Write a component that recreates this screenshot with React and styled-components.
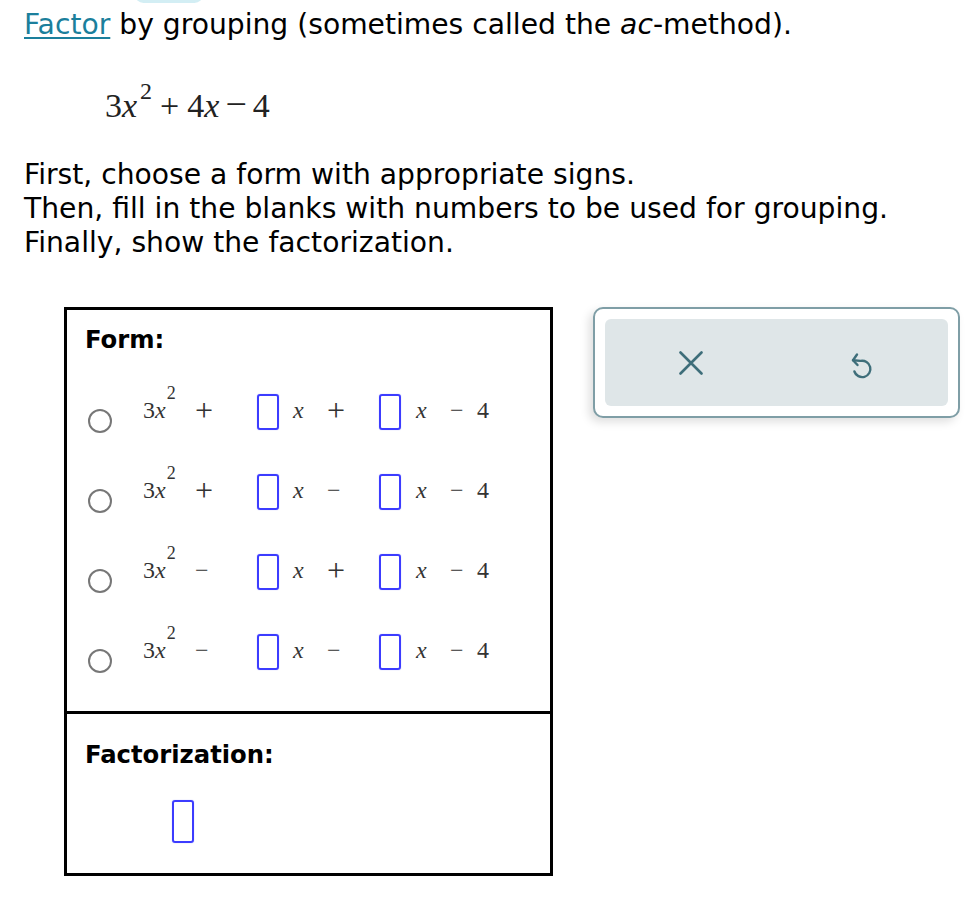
import React from "react";
import styled, { createGlobalStyle } from "styled-components";

const Global = createGlobalStyle`
  html, body { margin: 0; padding: 0; background: #fff; }
  body { font-family: "DejaVu Sans", Verdana, sans-serif; color: #000; }
`;

const Page = styled.div`
  position: relative;
  width: 966px;
  box-sizing: border-box;
  padding: 8px 0 0 24px;
`;

const TooltipTail = styled.div`
  position: absolute;
  left: 135px;
  top: -14px;
  width: 68px;
  height: 17px;
  border-radius: 9px;
  background: #d3eef4;
`;

const Prompt = styled.p`
  margin: 0;
  font-size: 28.2px;
  line-height: 34px;
`;

const Link = styled.a`
  color: #1b7f9c;
  text-decoration: underline;
  text-decoration-thickness: 2px;
  text-underline-offset: 3px;
`;

const Instructions = styled.p`
  margin: 32px 0 0;
  font-size: 28.2px;
  line-height: 34px;
`;

const MainExpr = styled.div`
  margin: 42px 0 0 81px;
  font-family: "Liberation Serif", "Times New Roman", serif;
  font-size: 34px;
  line-height: 40px;
  color: #222;
`;

const Var = styled.i`
  font-style: italic;
`;

const Sup = styled.span`
  font-size: ${(p) => p.$size}px;
  vertical-align: ${(p) => p.$raise}px;
  line-height: 0;
  margin-left: ${(p) => p.$gap}px;
`;

const MainOp = styled.span`
  font-size: ${(p) => p.$size || 34}px;
  margin: 0 ${(p) => p.$space}px;
`;

const Workspace = styled.div`
  display: flex;
  align-items: flex-start;
  gap: 40px;
  margin: 47px 0 0 40px;
`;

const Frame = styled.div`
  width: 489px;
  box-sizing: border-box;
  border: 3px solid #000;
`;

const Section = styled.div`
  padding: ${(p) => p.$pad};
  border-top: ${(p) => (p.$divided ? "3px solid #000" : "none")};
`;

const SectionTitle = styled.div`
  font-weight: bold;
  font-size: 24.3px;
  line-height: 30px;
`;

const Options = styled.div`
  display: flex;
  flex-direction: column;
  margin-top: 17px;
`;

const OptionRow = styled.label`
  display: grid;
  grid-template-columns: 58px 52px 62px 36px 34px 52px 37px 34px 27px auto;
  height: 80px;
  align-items: center;
  font-family: "Liberation Serif", "Times New Roman", serif;
  color: #333;
`;

const Radio = styled.input.attrs({ type: "radio" })`
  appearance: none;
  margin: 18px 0 0 3px;
  width: 24px;
  height: 24px;
  box-sizing: border-box;
  border: 2px solid #777;
  border-radius: 50%;
  background: #fff;
`;

const MathText = styled.span`
  font-size: ${(p) => p.$size || 24}px;
  line-height: 36px;
  margin-bottom: 5px;
  white-space: nowrap;
`;

const Blank = styled.span`
  display: inline-block;
  width: 22px;
  height: ${(p) => p.$h || 36}px;
  box-sizing: border-box;
  border: 2px solid #3c3cff;
  border-radius: 3px;
  box-shadow: 0 0 1px rgba(60, 60, 255, 0.5);
  margin-left: ${(p) => p.$indent || 0}px;
`;

const AnswerArea = styled.div`
  margin-top: 30px;
  height: 43px;
`;

const Tools = styled.div`
  width: 367px;
  height: 111px;
  box-sizing: border-box;
  padding: 10px;
  border: 2px solid #7f9ea6;
  border-radius: 10px;
  background: #fff;
  box-shadow: -4px 4px 10px rgba(0, 0, 0, 0.13);
`;

const ToolsInner = styled.div`
  height: 100%;
  display: grid;
  grid-template-columns: 1fr 1fr;
  align-items: center;
  justify-items: center;
  background: #dfe6e8;
  border-radius: 6px;
`;

const ToolButton = styled.button`
  all: unset;
  display: flex;
  align-items: center;
  justify-content: center;
  width: 40px;
  height: 40px;
  color: #3e6e7a;
`;

const CloseIcon = () => (
  <svg width="24" height="24" viewBox="0 0 24 24" fill="none" stroke="currentColor" strokeWidth="2.6" strokeLinecap="round">
    <path d="M1.5 1.5 L22.5 22.5 M22.5 1.5 L1.5 22.5" />
  </svg>
);

const UndoIcon = () => (
  <svg width="32" height="32" viewBox="0 0 32 32" fill="none" stroke="currentColor" strokeWidth="2.4" strokeLinecap="round" strokeLinejoin="round" style={{ marginTop: 4 }}>
    <path d="M8.4 22.5 A8.2 8.2 0 1 0 14.5 11.9 L7 11.2" />
    <path d="M11 5.5 L7 11.2 L11.5 16" />
  </svg>
);

const forms = [
  ["+", "+"],
  ["+", "−"],
  ["−", "+"],
  ["−", "−"],
];

const Op = ({ sign }) => (
  <MathText $size={sign === "+" ? 32 : 24}>{sign}</MathText>
);

export default function App() {
  return (
    <>
      <Global />
      <Page>
        <TooltipTail />
        <Prompt>
          <Link href="#">Factor</Link> by grouping (sometimes called the <i>ac</i>-method).
        </Prompt>
        <MainExpr>
          3<Var>x</Var>
          <Sup $size={24} $raise={18} $gap={3}>2</Sup>
          <MainOp $space={8}>+</MainOp>4<Var>x</Var>
          <MainOp $space={6} $size={38}>−</MainOp>4
        </MainExpr>
        <Instructions>
          First, choose a form with appropriate signs.
          <br />
          Then, fill in the blanks with numbers to be used for grouping.
          <br />
          Finally, show the factorization.
        </Instructions>
        <Workspace>
          <Frame>
            <Section $pad="15px 18px 19px">
              <SectionTitle>Form:</SectionTitle>
              <Options>
                {forms.map(([a, b], i) => (
                  <OptionRow key={i}>
                    <Radio name="form" />
                    <MathText>
                      3<Var>x</Var>
                      <Sup $size={18} $raise={19} $gap={1}>2</Sup>
                    </MathText>
                    <Op sign={a} />
                    <Blank />
                    <MathText><Var>x</Var></MathText>
                    <Op sign={b} />
                    <Blank />
                    <MathText><Var>x</Var></MathText>
                    <MathText>−</MathText>
                    <MathText>4</MathText>
                  </OptionRow>
                ))}
              </Options>
            </Section>
            <Section $divided $pad="26px 18px 30px">
              <SectionTitle>Factorization:</SectionTitle>
              <AnswerArea>
                <Blank $h={43} $indent={87} />
              </AnswerArea>
            </Section>
          </Frame>
          <Tools>
            <ToolsInner>
              <ToolButton aria-label="Clear"><CloseIcon /></ToolButton>
              <ToolButton aria-label="Undo"><UndoIcon /></ToolButton>
            </ToolsInner>
          </Tools>
        </Workspace>
      </Page>
    </>
  );
}
